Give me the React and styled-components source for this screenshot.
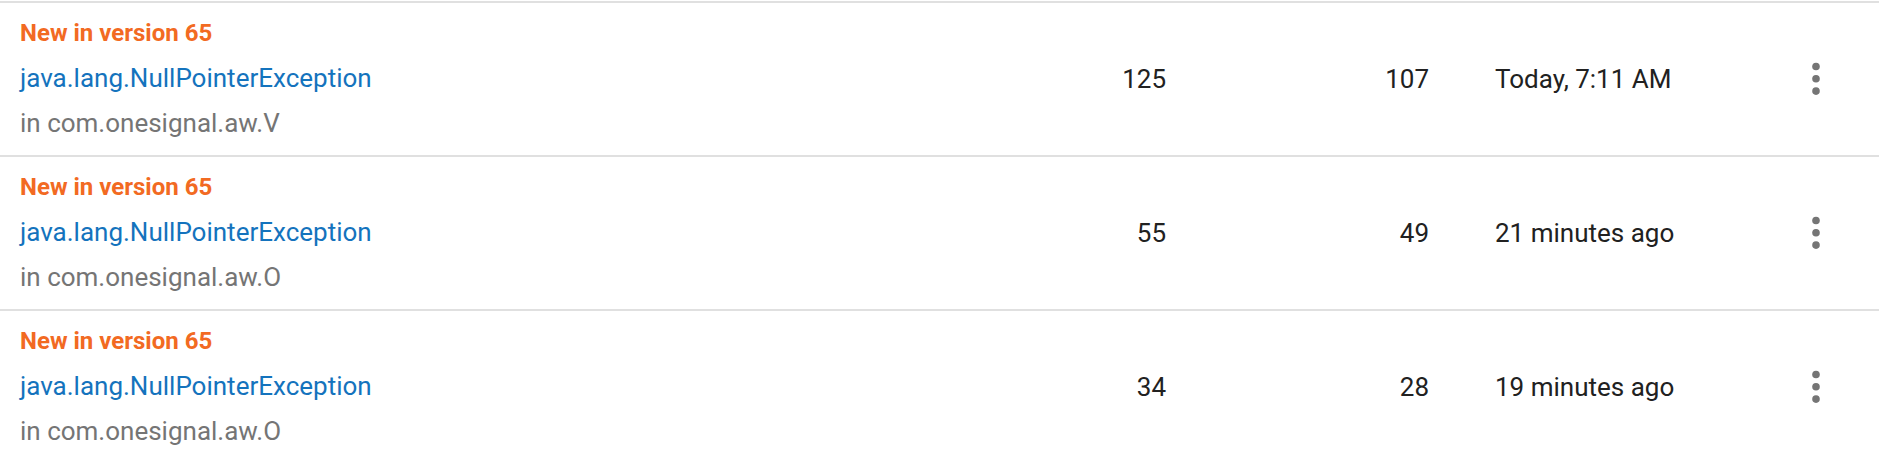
import styled, { createGlobalStyle } from "styled-components";

const GlobalStyle = createGlobalStyle`
    body {
        margin: 0;
        background: #fff;
        font-family: Roboto, "Noto Sans", Arial, sans-serif;
    }
`;

const Table = styled.div`
    width: 100%;
    padding-top: 1px;
`;

const Row = styled.div`
    display: grid;
    grid-template-columns: 1fr 200px 263px 361px 52px;
    align-items: center;
    height: 152px;
    padding: 0 37px 0 20px;
    border-top: 2px solid #e0e0e0;
`;

const IssueInfo = styled.div`
    display: flex;
    flex-direction: column;
    padding-top: 8px;
    align-self: start;
`;

const Badge = styled.span`
    font-size: 24px;
    line-height: 45px;
    font-weight: 700;
    color: #f26a22;
`;

const IssueTitle = styled.a`
    font-size: 26px;
    line-height: 45px;
    color: #1473bd;
    text-decoration: none;
    cursor: pointer;
`;

const IssueSub = styled.span`
    font-size: 26px;
    line-height: 45px;
    color: #757575;
`;

const Count = styled.span`
    font-size: 26px;
    color: #212121;
    text-align: right;
`;

const DateCell = styled.span`
    font-size: 26px;
    color: #212121;
    padding-left: 66px;
`;

const MenuButton = styled.button`
    display: flex;
    align-items: center;
    justify-content: center;
    width: 52px;
    height: 52px;
    padding: 0;
    border: none;
    background: none;
    cursor: pointer;
`;

const MoreIcon = () => (
    <svg width="10" height="40" viewBox="0 0 10 40">
        <circle cx="5" cy="7.5" r="3.8" fill="#757575" />
        <circle cx="5" cy="19.8" r="3.8" fill="#757575" />
        <circle cx="5" cy="32.1" r="3.8" fill="#757575" />
    </svg>
);

const issues = [
    { sub: "in com.onesignal.aw.V", crashes: 125, users: 107, when: "Today, 7:11 AM" },
    { sub: "in com.onesignal.aw.O", crashes: 55, users: 49, when: "21 minutes ago" },
    { sub: "in com.onesignal.aw.O", crashes: 34, users: 28, when: "19 minutes ago" },
];

const App = () => {
    return (
        <>
            <GlobalStyle />
            <Table>
                {issues.map((issue, i) => (
                    <Row key={i}>
                        <IssueInfo>
                            <Badge>New in version 65</Badge>
                            <IssueTitle>java.lang.NullPointerException</IssueTitle>
                            <IssueSub>{issue.sub}</IssueSub>
                        </IssueInfo>
                        <Count>{issue.crashes}</Count>
                        <Count>{issue.users}</Count>
                        <DateCell>{issue.when}</DateCell>
                        <MenuButton aria-label="More">
                            <MoreIcon />
                        </MenuButton>
                    </Row>
                ))}
            </Table>
        </>
    );
};

export default App;
